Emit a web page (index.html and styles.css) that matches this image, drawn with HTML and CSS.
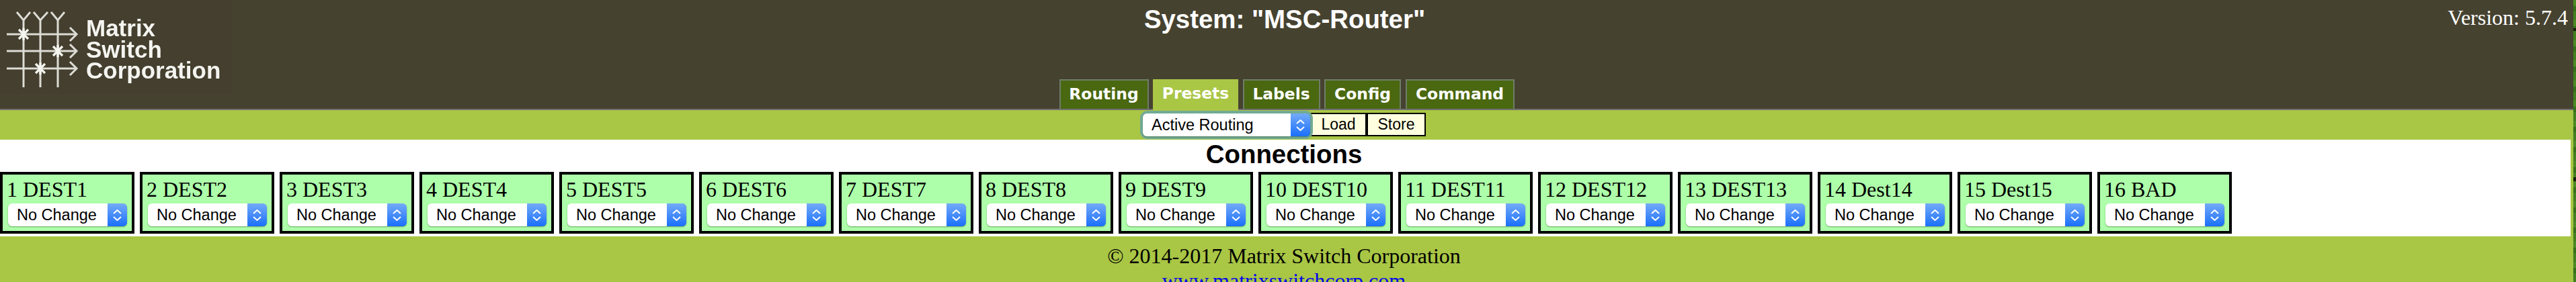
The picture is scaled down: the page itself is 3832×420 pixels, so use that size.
FILE: index.html
```html
<!DOCTYPE html>
<html lang="en">
<head>
<meta charset="utf-8">
<title>MSC-Router</title>
<link rel="stylesheet" href="styles.css">
</head>
<body>
<div class="page">
  <header class="header">
    <div class="logo">
      <svg class="logo-svg" width="345" height="140" viewBox="0 0 345 140">
        <g class="logo-lines">
          <path d="M25 18 35 30 45 18M50 18 60 30 71 18M76 18 86 30 96 18"/>
          <path d="M35 28V130M60 28V130M86 28V130"/>
          <path d="M10 51H114M10 76H114M10 102H114"/>
          <path d="M104 41 114 51 104 61M104 66 114 76 104 86M104 92 114 102 104 112"/>
          <path class="logo-star" d="M28 44 42 58M42 44 28 58M35 42V60M79 69 93 83M93 69 79 83M86 67V85M53 95 67 109M67 95 53 109M60 93V111"/>
        </g>
        <text class="logo-text" x="128" y="54">Matrix</text>
        <text class="logo-text" x="128" y="86">Switch</text>
        <text class="logo-text" x="128" y="117">Corporation</text>
      </svg>
    </div>
    <div class="header-center">
      <h1 class="title">System: "MSC-Router"</h1>
      <nav class="tabs">
        <a class="tab tab-routing">Routing</a>
        <a class="tab tab-presets active">Presets</a>
        <a class="tab tab-labels">Labels</a>
        <a class="tab tab-config">Config</a>
        <a class="tab tab-command">Command</a>
      </nav>
    </div>
    <div class="version">Version: 5.7.4</div>
  </header>

  <div class="toolbar">
    <div class="select-wrap select-active">
      <select class="select"><option>Active Routing</option></select>
      <svg class="chevrons" width="13" height="17" viewBox="0 0 13 17"><path d="M1 6 6.500 1 12 6M1 11 6.500 16 12 11"/></svg>
    </div>
    <button class="btn">Load</button>
    <button class="btn">Store</button>
  </div>

  <main class="content">
    <h2 class="heading">Connections</h2>
    <div class="grid" id="grid">
      <div class="dest"><div class="dest-name">1 DEST1</div><div class="select-wrap"><select class="select"><option>No Change</option></select><svg class="chevrons" width="13" height="17" viewBox="0 0 13 17"><path d="M1 6 6.500 1 12 6M1 11 6.500 16 12 11"/></svg></div></div>
      <div class="dest"><div class="dest-name">2 DEST2</div><div class="select-wrap"><select class="select"><option>No Change</option></select><svg class="chevrons" width="13" height="17" viewBox="0 0 13 17"><path d="M1 6 6.500 1 12 6M1 11 6.500 16 12 11"/></svg></div></div>
      <div class="dest"><div class="dest-name">3 DEST3</div><div class="select-wrap"><select class="select"><option>No Change</option></select><svg class="chevrons" width="13" height="17" viewBox="0 0 13 17"><path d="M1 6 6.500 1 12 6M1 11 6.500 16 12 11"/></svg></div></div>
      <div class="dest"><div class="dest-name">4 DEST4</div><div class="select-wrap"><select class="select"><option>No Change</option></select><svg class="chevrons" width="13" height="17" viewBox="0 0 13 17"><path d="M1 6 6.500 1 12 6M1 11 6.500 16 12 11"/></svg></div></div>
      <div class="dest"><div class="dest-name">5 DEST5</div><div class="select-wrap"><select class="select"><option>No Change</option></select><svg class="chevrons" width="13" height="17" viewBox="0 0 13 17"><path d="M1 6 6.500 1 12 6M1 11 6.500 16 12 11"/></svg></div></div>
      <div class="dest"><div class="dest-name">6 DEST6</div><div class="select-wrap"><select class="select"><option>No Change</option></select><svg class="chevrons" width="13" height="17" viewBox="0 0 13 17"><path d="M1 6 6.500 1 12 6M1 11 6.500 16 12 11"/></svg></div></div>
      <div class="dest"><div class="dest-name">7 DEST7</div><div class="select-wrap"><select class="select"><option>No Change</option></select><svg class="chevrons" width="13" height="17" viewBox="0 0 13 17"><path d="M1 6 6.500 1 12 6M1 11 6.500 16 12 11"/></svg></div></div>
      <div class="dest"><div class="dest-name">8 DEST8</div><div class="select-wrap"><select class="select"><option>No Change</option></select><svg class="chevrons" width="13" height="17" viewBox="0 0 13 17"><path d="M1 6 6.500 1 12 6M1 11 6.500 16 12 11"/></svg></div></div>
      <div class="dest"><div class="dest-name">9 DEST9</div><div class="select-wrap"><select class="select"><option>No Change</option></select><svg class="chevrons" width="13" height="17" viewBox="0 0 13 17"><path d="M1 6 6.500 1 12 6M1 11 6.500 16 12 11"/></svg></div></div>
      <div class="dest"><div class="dest-name">10 DEST10</div><div class="select-wrap"><select class="select"><option>No Change</option></select><svg class="chevrons" width="13" height="17" viewBox="0 0 13 17"><path d="M1 6 6.500 1 12 6M1 11 6.500 16 12 11"/></svg></div></div>
      <div class="dest"><div class="dest-name">11 DEST11</div><div class="select-wrap"><select class="select"><option>No Change</option></select><svg class="chevrons" width="13" height="17" viewBox="0 0 13 17"><path d="M1 6 6.500 1 12 6M1 11 6.500 16 12 11"/></svg></div></div>
      <div class="dest"><div class="dest-name">12 DEST12</div><div class="select-wrap"><select class="select"><option>No Change</option></select><svg class="chevrons" width="13" height="17" viewBox="0 0 13 17"><path d="M1 6 6.500 1 12 6M1 11 6.500 16 12 11"/></svg></div></div>
      <div class="dest"><div class="dest-name">13 DEST13</div><div class="select-wrap"><select class="select"><option>No Change</option></select><svg class="chevrons" width="13" height="17" viewBox="0 0 13 17"><path d="M1 6 6.500 1 12 6M1 11 6.500 16 12 11"/></svg></div></div>
      <div class="dest"><div class="dest-name">14 Dest14</div><div class="select-wrap"><select class="select"><option>No Change</option></select><svg class="chevrons" width="13" height="17" viewBox="0 0 13 17"><path d="M1 6 6.500 1 12 6M1 11 6.500 16 12 11"/></svg></div></div>
      <div class="dest"><div class="dest-name">15 Dest15</div><div class="select-wrap"><select class="select"><option>No Change</option></select><svg class="chevrons" width="13" height="17" viewBox="0 0 13 17"><path d="M1 6 6.500 1 12 6M1 11 6.500 16 12 11"/></svg></div></div>
      <div class="dest"><div class="dest-name">16 BAD</div><div class="select-wrap"><select class="select"><option>No Change</option></select><svg class="chevrons" width="13" height="17" viewBox="0 0 13 17"><path d="M1 6 6.500 1 12 6M1 11 6.500 16 12 11"/></svg></div></div>
    </div>
  </main>

  <footer class="footer">
    <div>© 2014-2017 Matrix Switch Corporation</div>
    <a class="footer-link" href="#">www.matrixswitchcorp.com</a>
  </footer>
</div>
<div class="strip"></div>
</body>
</html>
```
FILE: styles.css
```css
html, body {
  margin: 0;
  padding: 0;
  height: 420px;
  overflow: hidden;
}
body {
  display: flex;
  background: #a9c645;
  font-family: "Liberation Serif", serif;
  color: #000;
}
.page {
  width: 3828px;
  flex: none;
  height: 420px;
  overflow: hidden;
  display: flex;
  flex-direction: column;
}
.strip {
  flex: 1;
  background:
    linear-gradient(180deg, transparent 0 42px, #12200a 42px 46px, transparent 46px 264px, #12200a 264px 270px, transparent 270px),
    repeating-linear-gradient(180deg, #4c8a24 0 9px, #35701a 9px 17px, #42801f 17px 30px);
}

/* header */
.header {
  height: 162px;
  flex: none;
  background: #464230;
  border-bottom: 2px solid #6f6f72;
  display: grid;
  grid-template-columns: 1fr auto 1fr;
  position: relative;
}
.logo {
  height: 162px;
}
.logo-svg {
  display: block;
  background: #443f2e;
  filter: blur(0.5px);
}
.logo-lines path {
  fill: none;
  stroke: #dcdcd5;
  stroke-width: 3;
}
.logo-lines .logo-star {
  stroke: #f5f5f0;
  stroke-width: 3.400;
}
.logo-text {
  font-family: "Liberation Sans", sans-serif;
  font-weight: 700;
  font-size: 35px;
  fill: #f4f4f0;
}
.header-center {
  display: flex;
  flex-direction: column;
  align-items: center;
  justify-content: space-between;
}
.title {
  margin: 7px 6px 0 0;
  font-family: "Liberation Sans", sans-serif;
  font-weight: 700;
  font-size: 38.400px;
  line-height: 44px;
  color: #fff;
}
.tabs {
  display: flex;
  gap: 6.500px;
  align-items: flex-end;
  height: 44px;
}
.tab {
  box-sizing: border-box;
  height: 44px;
  background: #4a680f;
  border: 2px solid #6e7d68;
  border-bottom: 0;
  color: #fff;
  font-family: "DejaVu Sans", sans-serif;
  font-weight: 700;
  font-size: 23.400px;
  line-height: 41px;
  text-align: center;
}
.tab-routing { width: 133px; }
.tab-presets { width: 127px; }
.tab-labels { width: 115px; }
.tab-config { width: 114px; }
.tab-command { width: 162px; }
.tab.active {
  height: 46px;
  margin-bottom: -2px;
  position: relative;
  background: #a9c645;
  border: 0;
  line-height: 43px;
  color: #fff;
}
.version {
  justify-self: end;
  margin: 8px 8px 0 0;
  font-size: 32px;
  line-height: 37px;
  color: #fff;
}

/* toolbar */
.toolbar {
  height: 44px;
  flex: none;
  display: flex;
  justify-content: center;
  align-items: flex-start;
  padding: 4px 7px 0 0;
  box-sizing: border-box;
}
.select-wrap {
  position: relative;
  width: 177px;
  height: 34px;
}
.select-active {
  width: 249px;
  margin-top: 1px;
  border-radius: 7px;
  box-shadow: 0 0 0 4px #72ab96;
}
.select {
  appearance: none;
  -webkit-appearance: none;
  display: block;
  box-sizing: border-box;
  width: 100%;
  height: 34px;
  margin: 0;
  padding: 0 32px 0 13px;
  border: 0;
  border-radius: 6px;
  font-family: "Liberation Sans", sans-serif;
  font-size: 23.500px;
  color: #000;
  background: linear-gradient(180deg, #74abf8, #1a6ffb) no-repeat right / 29px 100%, #fff;
  box-shadow: 0 1px 2px rgba(60, 90, 50, .55);
}
.chevrons {
  position: absolute;
  right: 8px;
  top: 9px;
  pointer-events: none;
}
.chevrons path {
  fill: none;
  stroke: #fff;
  stroke-width: 2;
}
.btn {
  box-sizing: border-box;
  height: 35px;
  margin: 0;
  padding: 0;
  width: 84px;
  background: #ffffe0;
  border: 2px solid #000;
  border-radius: 0;
  font-family: "Liberation Sans", sans-serif;
  font-size: 23px;
  color: #000;
}
.btn + .btn { width: 88px; }

/* content */
.content {
  flex: none;
  height: 144px;
  margin-right: 4px;
  background: #fff;
}
.heading {
  height: 48px;
  margin: 0;
  padding-right: 4px;
  text-align: center;
  font-family: "Liberation Sans", sans-serif;
  font-weight: 700;
  font-size: 38.400px;
  line-height: 44px;
}
.grid {
  display: flex;
  gap: 8px;
}
.dest {
  box-sizing: border-box;
  width: 200px;
  height: 92px;
  padding: 4px 7px 0 8px;
  background: #aeffaa;
  border: 4px solid #000;
}
.dest-name {
  margin-left: -2px;
  font-size: 32px;
  line-height: 37px;
  height: 39px;
  white-space: nowrap;
}

/* footer */
.footer {
  flex: 1;
  padding: 11px 8px 0 0;
  text-align: center;
  font-size: 32px;
  line-height: 37px;
}
.footer-link {
  color: #0000ee;
  text-decoration: none;
}
```
